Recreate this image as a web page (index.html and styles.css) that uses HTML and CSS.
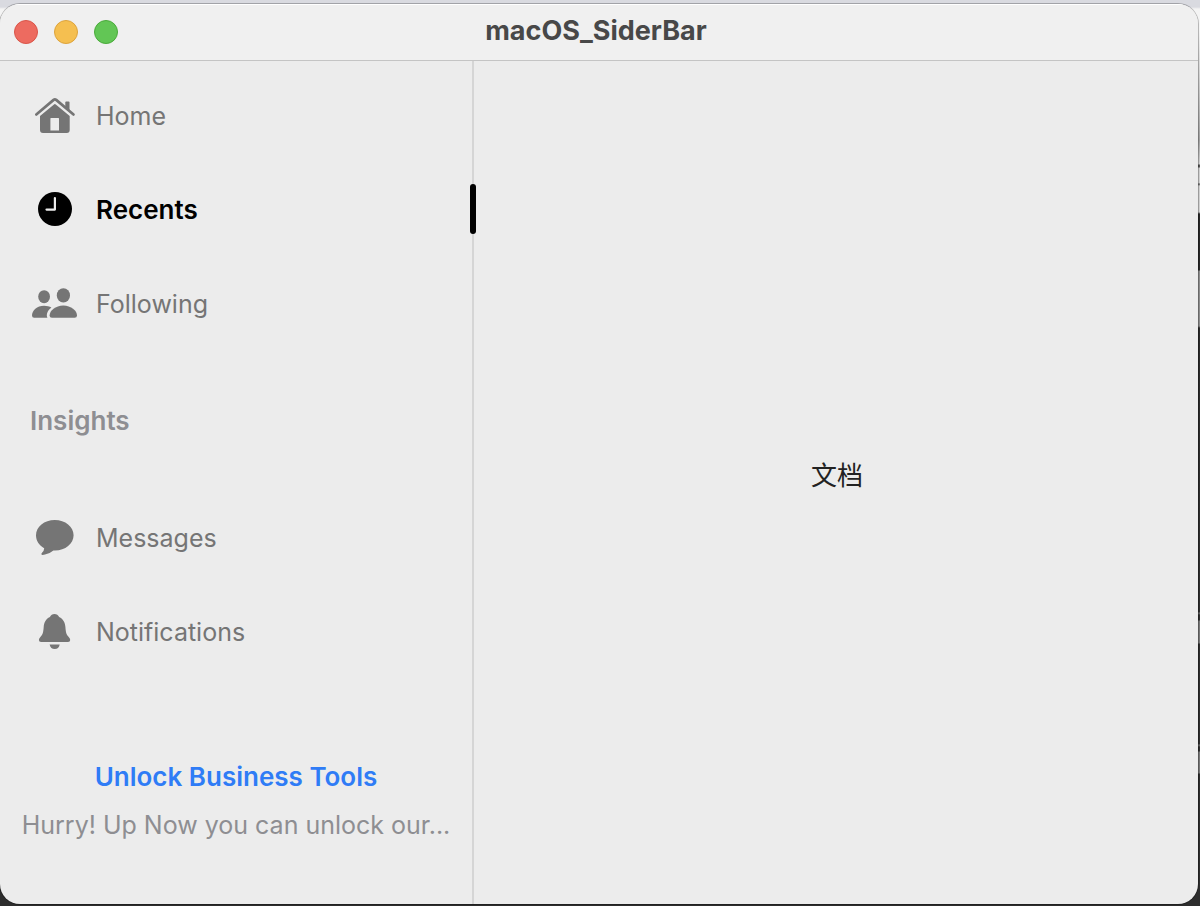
FILE: index.html
```html
<!DOCTYPE html>
<html lang="en">
<head>
<meta charset="utf-8">
<title>macOS_SiderBar</title>
<link rel="stylesheet" href="styles.css">
</head>
<body>
<div class="window">
  <header class="titlebar">
    <div class="controls">
      <button class="light close" aria-label="Close"></button>
      <button class="light minimize" aria-label="Minimize"></button>
      <button class="light zoom" aria-label="Zoom"></button>
    </div>
    <h1 class="title">macOS_SiderBar</h1>
  </header>
  <div class="body">
    <aside class="sidebar">
      <nav class="nav">
        <button class="item">
          <svg class="icon" viewBox="0 0 48 48" aria-hidden="true">
            <path d="M35.3 10.500q0-.9.9-.9h2.400q.9 0 .9.900V18.400l-4.200-3.500z" fill="currentColor"/>
            <path d="M6.300 22.500 23.600 7.900q1.300-1 2.600 0L43.500 22.500" fill="none" stroke="currentColor" stroke-width="2.700" stroke-linecap="round" stroke-linejoin="round"/>
            <path fill-rule="evenodd" d="M10 23.900 24 12.400q.9-.7 1.800 0L39.700 23.900V38q0 3-3 3H13q-3 0-3-3zM20.400 26.600v11.800h8.600V26.600q0-.6-.6-.6H21q-.6 0-.6.600z" fill="currentColor"/>
          </svg>
          <span>Home</span>
        </button>
        <button class="item selected" aria-current="page">
          <svg class="icon" viewBox="0 0 48 48" aria-hidden="true">
            <circle cx="25" cy="23" r="17" fill="currentColor"/>
            <path d="M24.900 12v11.600h-8.400" fill="none" stroke="#ececec" stroke-width="2.200" stroke-linecap="round" stroke-linejoin="round"/>
          </svg>
          <span>Recents</span>
        </button>
        <button class="item">
          <svg class="icon" viewBox="0 0 48 48" aria-hidden="true">
            <g fill="currentColor">
              <ellipse cx="14.100" cy="16.700" rx="5.900" ry="6.500"/>
              <ellipse cx="33.400" cy="15.400" rx="6.600" ry="7.200"/>
              <path d="M14 25.700c3 0 5.500.7 7.400 1.800-2.800 2-4.600 5-4.600 7.800 0 1 .2 1.800.6 2.500H4.200q-2.200 0-2.200-2.200C2 30.500 7 25.700 14 25.700z"/>
              <path d="M33.300 25.600C41 25.600 47 30.800 47 35.500q0 2.300-2.400 2.300H22q-2.400 0-2.400-2.300c0-4.700 6-9.900 13.700-9.900z"/>
            </g>
          </svg>
          <span>Following</span>
        </button>
        <h2 class="section">Insights</h2>
        <button class="item">
          <svg class="icon" viewBox="0 0 48 48" aria-hidden="true">
            <path d="M24.800 6C35.300 6 43.600 12.700 43.600 21.300S35.300 36.500 25 36.500q-.9 0-1.600-.1-3.800 3.200-8.400 4.200-3.400.8-3.600-.3-.2-.7.8-1.700 1.900-1.800 2-4.300C9.100 31.500 6 26.800 6 21.300 6 12.700 14.300 6 24.800 6z" fill="currentColor"/>
          </svg>
          <span>Messages</span>
        </button>
        <button class="item">
          <svg class="icon" viewBox="0 0 48 48" aria-hidden="true">
            <path d="M24.500 6q3.200 0 4.600 3c4.300 2 6 5.800 6.300 10 .4 5.700 1 7.500 3.300 10q1.500 1.600 1.500 3.100 0 2-2.200 2H11.100q-2.200 0-2.200-2 0-1.500 1.500-3.100c2.300-2.500 2.900-4.300 3.300-10 .3-4.200 1.900-8 6.200-10q1.400-3 4.600-3zM19.600 36.500h10.100q-.9 4.500-5 4.500t-5.100-4.500z" fill="currentColor"/>
          </svg>
          <span>Notifications</span>
        </button>
      </nav>
      <div class="promo">
        <a class="promo-link" href="#">Unlock Business Tools</a>
        <p class="promo-text">Hurry! Up Now you can unlock our...</p>
      </div>
    </aside>
    <main class="content"><p lang="zh-CN">文档</p></main>
  </div>
</div>
</body>
</html>
```
FILE: styles.css
```css
* { box-sizing: border-box; }

body {
  display: flex;
  min-height: 100vh;
  margin: 0;
  padding: 4px 2px 2px 0;
  font-family: Inter, "Noto Sans CJK SC", sans-serif;
  font-size: 25px;
  line-height: 32px;
  color: #757575;
  background: linear-gradient(to bottom, #d9dae0 7px, #f4f4f4 9px, #f4f4f4 30px, #a0a0a0 140px, #d0d0d0 164px, #555555 165px, #555555 167px, #d0d0d0 168px, #d0d0d0 183px, #555555 184px, #d0d0d0 186px, #d0d0d0 212px, #282828 214px, #282828 270px, #8c8c8c 271px, #8c8c8c 326px, #2a2a2a 328px, #2d2d2d 612px, #777777 613px, #2d2d2d 615px, #2d2d2d 620px, #777777 621px, #777777 643px, #2d2d2d 644px, #2d2d2d 744px, #777777 745px, #2d2d2d 747px, #2d2d2d 751px, #777777 752px, #777777 773px, #2d2d2d 774px);
}

h1, h2, p { margin: 0; }

button {
  padding: 0;
  border: 0;
  background: none;
  font: inherit;
  color: inherit;
  text-align: left;
}

.window {
  display: flex;
  flex: 1;
  flex-direction: column;
  min-width: 0;
  overflow: hidden;
  border-radius: 20px;
  background: #ececec;
  box-shadow: 0 0 0 1px rgba(0, 0, 0, 0.25);
}

.titlebar {
  display: grid;
  grid-template-columns: 1fr auto 1fr;
  align-items: center;
  height: 57px;
  padding: 0 20px 0 14px;
  border-bottom: 1px solid #c4c4c4;
  background: #f0f0f0;
  box-shadow: inset 0 1px #ffffff;
}

.controls { display: flex; gap: 16px; }

.light {
  width: 24px;
  height: 24px;
  border: 1px solid;
  border-radius: 50%;
}

.close { border-color: #d95549; background: #ed6b60; }
.minimize { border-color: #dca33d; background: #f5bf50; }
.zoom { border-color: #4aaa3b; background: #62c655; }

.title {
  padding-bottom: 2px;
  font-size: 27px;
  font-weight: 700;
  line-height: 32px;
  color: #484848;
}

.body { display: flex; flex: 1; }

.sidebar {
  display: flex;
  flex-direction: column;
  justify-content: space-between;
  flex: 0 0 474px;
  padding: 8px 0 63px;
  border-right: 2px solid #d5d5d5;
}

.nav { display: flex; flex-direction: column; }

.item {
  position: relative;
  display: flex;
  align-items: center;
  gap: 18px;
  height: 94px;
  padding-left: 30px;
}

.icon { width: 48px; height: 48px; }

.selected { font-size: 26px; font-weight: 600; color: #000000; }

/* Marker lies over the sidebar divider */
.selected::after {
  content: "";
  position: absolute;
  top: 21px;
  right: -4px;
  width: 6px;
  height: 50px;
  border-radius: 3px;
  background: #000000;
}

.section {
  padding: 54px 30px;
  font-size: 26px;
  font-weight: 600;
  line-height: 32px;
  color: #8e8e92;
}

.promo {
  display: flex;
  flex-direction: column;
  align-items: center;
  gap: 16px;
}

.promo-link {
  font-size: 26px;
  font-weight: 600;
  color: #2f7cf6;
  text-decoration: none;
}

.promo-text { color: #8e8e92; white-space: nowrap; }

.content {
  display: flex;
  flex: 1;
  align-items: center;
  justify-content: center;
  padding: 0 0 14px 2px;
  font-size: 26px;
  color: #222222;
}
```
